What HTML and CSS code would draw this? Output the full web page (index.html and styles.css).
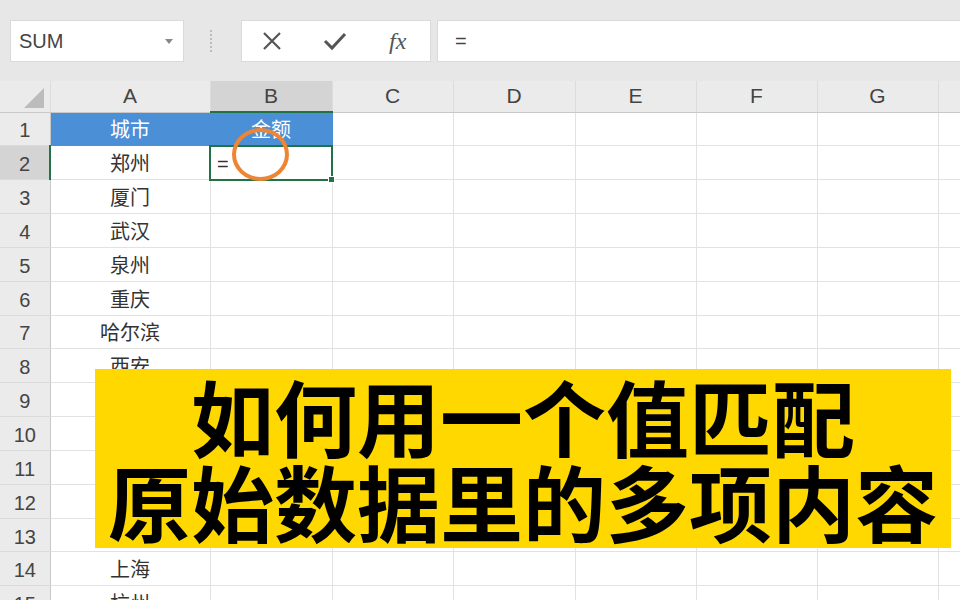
FILE: index.html
```html
<!DOCTYPE html>
<html>
<head>
    <title>SUM - 城市金额</title>
    <link rel="stylesheet" href="styles.css">
</head>
<body>
    <div class="toolbar">
        <div class="namebox">
            <span>SUM</span>
            <svg class="caret" width="8" height="5" viewBox="0 0 8 5"><path d="M0 0 L8 0 L4 5 Z" fill="#888"/></svg>
        </div>
        <div class="grip"></div>
        <div class="fbtns">
            <svg class="fbtn" width="22" height="22" viewBox="0 0 22 22"><path d="M3 3 L19 19 M19 3 L3 19" stroke="#555" stroke-width="2.2" fill="none"/></svg>
            <svg class="fbtn" width="24" height="22" viewBox="0 0 24 22"><path d="M2 11 L9 18 L22 4" stroke="#555" stroke-width="3" fill="none"/></svg>
            <span class="fx">fx</span>
        </div>
        <div class="finput">=</div>
    </div>

    <div class="sheet">
        <table class="grid">
            <colgroup>
                <col class="c-head">
                <col class="c-a">
                <col class="c-b">
                <col class="c-n">
                <col class="c-b">
                <col class="c-n">
                <col class="c-n">
                <col class="c-n">
                <col class="c-rest">
            </colgroup>
            <tr class="colhead">
                <th class="corner"><span class="tri"></span></th>
                <th>A</th>
                <th class="sel-col">B</th>
                <th>C</th>
                <th>D</th>
                <th>E</th>
                <th>F</th>
                <th>G</th>
                <th></th>
            </tr>
            <tr>
                <th class="rowhead">1</th>
                <td class="blue">城市</td>
                <td class="blue">金额</td>
                <td></td><td></td><td></td><td></td><td></td><td></td>
            </tr>
            <tr>
                <th class="rowhead sel-row">2</th>
                <td>郑州</td>
                <td class="active">=</td>
                <td></td><td></td><td></td><td></td><td></td><td></td>
            </tr>
            <tr>
                <th class="rowhead">3</th>
                <td>厦门</td>
                <td></td><td></td><td></td><td></td><td></td><td></td><td></td>
            </tr>
            <tr>
                <th class="rowhead">4</th>
                <td>武汉</td>
                <td></td><td></td><td></td><td></td><td></td><td></td><td></td>
            </tr>
            <tr>
                <th class="rowhead">5</th>
                <td>泉州</td>
                <td></td><td></td><td></td><td></td><td></td><td></td><td></td>
            </tr>
            <tr>
                <th class="rowhead">6</th>
                <td>重庆</td>
                <td></td><td></td><td></td><td></td><td></td><td></td><td></td>
            </tr>
            <tr>
                <th class="rowhead">7</th>
                <td>哈尔滨</td>
                <td></td><td></td><td></td><td></td><td></td><td></td><td></td>
            </tr>
            <tr>
                <th class="rowhead">8</th>
                <td>西安</td>
                <td></td><td></td><td></td><td></td><td></td><td></td><td></td>
            </tr>
            <tr>
                <th class="rowhead">9</th>
                <td></td>
                <td></td><td></td><td></td><td></td><td></td><td></td><td></td>
            </tr>
            <tr>
                <th class="rowhead">10</th>
                <td></td>
                <td></td><td></td><td></td><td></td><td></td><td></td><td></td>
            </tr>
            <tr>
                <th class="rowhead">11</th>
                <td></td>
                <td></td><td></td><td></td><td></td><td></td><td></td><td></td>
            </tr>
            <tr>
                <th class="rowhead">12</th>
                <td></td>
                <td></td><td></td><td></td><td></td><td></td><td></td><td></td>
            </tr>
            <tr>
                <th class="rowhead">13</th>
                <td></td>
                <td></td><td></td><td></td><td></td><td></td><td></td><td></td>
            </tr>
            <tr>
                <th class="rowhead">14</th>
                <td>上海</td>
                <td></td><td></td><td></td><td></td><td></td><td></td><td></td>
            </tr>
            <tr>
                <th class="rowhead">15</th>
                <td>杭州</td>
                <td></td><td></td><td></td><td></td><td></td><td></td><td></td>
            </tr>
        </table>

        <!-- highlight ring drawn over B1/B2 -->
        <div class="ring"></div>

        <div class="banner">
            <div class="line">如何用一个值匹配</div>
            <div class="line">原始数据里的多项内容</div>
        </div>
    </div>
</body>
</html>
```

FILE: styles.css
```css
html, body {
    margin: 0;
    padding: 0;
    width: 960px;
    height: 600px;
    overflow: hidden;
    background: #fff;
    font-family: "Liberation Sans", "Noto Sans CJK SC", sans-serif;
    color: #333;
}

.toolbar {
    height: 81px;
    background: #e7e7e7;
    display: flex;
    align-items: flex-start;
    padding-top: 20px;
    box-sizing: border-box;
}
.namebox {
    margin-left: 10px;
    width: 174px;
    height: 42px;
    background: #fff;
    border: 1px solid #dadada;
    box-sizing: border-box;
    display: flex;
    align-items: center;
    justify-content: space-between;
    padding: 0 10px 0 8px;
    font-size: 20px;
    color: #444;
}
.grip {
    width: 2px;
    height: 22px;
    margin: 10px 27px 0 26px;
    border-left: 2px dotted #bdbdbd;
}
.fbtns {
    width: 190px;
    height: 42px;
    background: #fff;
    border: 1px solid #dadada;
    box-sizing: border-box;
    display: flex;
    align-items: center;
    padding-left: 19px;
    gap: 40px;
}
.fx {
    font-family: "Liberation Serif", serif;
    font-style: italic;
    font-size: 24px;
    color: #555;
    margin-left: 2px;
}
.finput {
    margin-left: 6px;
    flex: 1;
    height: 42px;
    background: #fff;
    border: 1px solid #dadada;
    border-right: none;
    box-sizing: border-box;
    padding-left: 17px;
    line-height: 40px;
    font-size: 20px;
    color: #444;
}

.sheet {
    position: relative;
}
.grid {
    border-collapse: collapse;
    table-layout: fixed;
    width: 990px;
}
.c-head { width: 50px; }
.c-a { width: 160px; }
.c-b { width: 122px; }
.c-n { width: 121px; }
.c-rest { width: 52px; }

.grid tr {
    height: 33.85px;
}
.grid th, .grid td {
    padding: 3px 0 0 0;
    border-right: 1px solid #e2e2e2;
    border-bottom: 1px solid #e2e2e2;
    text-align: center;
    font-size: 20px;
    font-weight: normal;
    line-height: 28px;
    white-space: nowrap;
    overflow: hidden;
}
.grid td {
    color: #333;
}
.grid tr.colhead {
    height: 31px;
}
.colhead th {
    padding-top: 0;
    background: #ebebeb;
    color: #444;
    font-size: 21px;
    border-right: 1px solid #dcdcdc;
    border-bottom: 1px solid #c8c8c8;
}
.colhead .sel-col {
    background: #d4d4d4;
    border-bottom: 2px solid #217346;
}
.corner {
    position: relative;
}
.tri {
    position: absolute;
    right: 6px;
    bottom: 4px;
    width: 0;
    height: 0;
    border-left: 20px solid transparent;
    border-bottom: 20px solid #bcbcbc;
}
.rowhead {
    background: #ebebeb;
    color: #444;
    font-size: 21px;
    border-right: 1px solid #c8c8c8 !important;
    border-bottom: 1px solid #dadada !important;
}
.rowhead.sel-row {
    background: #d4d4d4;
    border-right: 2px solid #217346 !important;
}
.grid td.blue {
    background: #4b8fd6;
    color: #fff;
    border-color: #4b8fd6;
}
.grid td.active {
    position: relative;
    text-align: left;
    padding-left: 6px;
    border: 2px solid #217346;
    overflow: visible;
}
.grid td.active::after {
    content: "";
    position: absolute;
    right: -4px;
    bottom: -4px;
    width: 5px;
    height: 5px;
    background: #217346;
    border: 1px solid #fff;
}

.ring {
    position: absolute;
    left: 232px;
    top: 47px;
    width: 57px;
    height: 53px;
    border: 4px solid #ee8534;
    border-radius: 50%;
    box-sizing: border-box;
}

.banner {
    position: absolute;
    left: 95px;
    top: 288px;
    width: 856px;
    height: 179px;
    background: #ffd800;
    color: #000;
    text-align: center;
    font-family: "Noto Sans CJK SC", sans-serif;
    font-weight: 700;
    font-size: 83px;
    padding-top: 4px;
    box-sizing: border-box;
    white-space: nowrap;
}
.banner .line {
    height: 85px;
    line-height: 85px;
}
```
